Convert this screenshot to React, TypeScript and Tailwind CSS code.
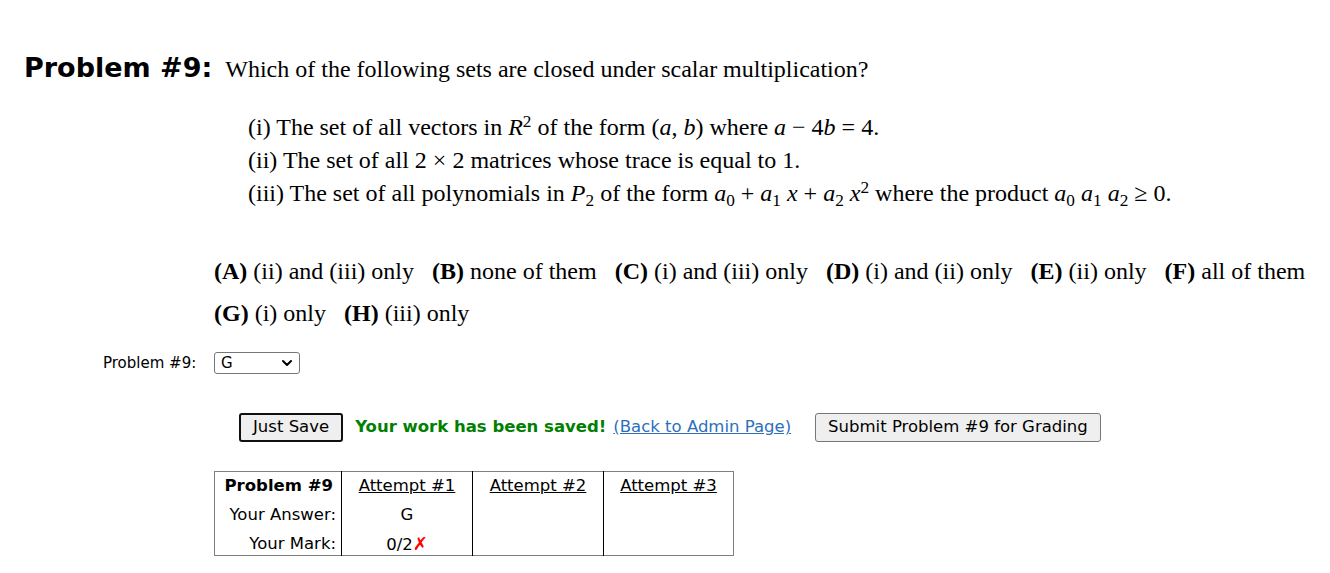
import { ChevronDown } from 'lucide-react';

const sans = { fontFamily: '"DejaVu Sans", Verdana, sans-serif' };

function I({ children }: { children: React.ReactNode }) {
  return <span className="italic">{children}</span>;
}

function Sub({ children }: { children: React.ReactNode }) {
  return <span className="relative top-[0.3em] text-[0.72em] leading-none">{children}</span>;
}

function Sup({ children }: { children: React.ReactNode }) {
  return <span className="relative -top-[0.45em] text-[0.72em] leading-none">{children}</span>;
}

function Opt({ letter, text }: { letter: string; text: string }) {
  return (
    <span className="mr-[18px] whitespace-nowrap">
      <b>({letter})</b> {text}
    </span>
  );
}

export default function App() {
  return (
    <div className="min-h-[573px] w-[1330px] bg-white text-black" style={{ fontFamily: '"Liberation Serif", "Times New Roman", serif' }}>
      <div className="pl-6 pt-[50px]">
        <div className="flex h-[36px] items-baseline leading-[36px]">
          <span className="text-[27px] font-bold" style={sans}>Problem #9:</span>
          <span className="ml-[13px] text-[24px]">Which of the following sets are closed under scalar multiplication?</span>
        </div>

        <div className="ml-[224px] mt-[25px] flex flex-col text-[24px] leading-[33px]">
          <div>
            (i) The set of all vectors in <I>R</I><Sup>2</Sup> of the form (<I>a</I>, <I>b</I>) where <I>a</I> − 4<I>b</I> = 4.
          </div>
          <div>(ii) The set of all 2 × 2 matrices whose trace is equal to 1.</div>
          <div>
            (iii) The set of all polynomials in <I>P</I><Sub>2</Sub> of the form <I>a</I><Sub>0</Sub> + <I>a</I><Sub>1</Sub> <I>x</I> + <I>a</I><Sub>2</Sub> <I>x</I><Sup>2</Sup> where the product <I>a</I><Sub>0</Sub> <I>a</I><Sub>1</Sub> <I>a</I><Sub>2</Sub> ≥ 0.
          </div>
        </div>

        <div className="ml-[190px] mt-[40px] text-[24px] leading-[42px]">
          <div className="whitespace-nowrap">
            <Opt letter="A" text="(ii) and (iii) only" />
            <Opt letter="B" text="none of them" />
            <Opt letter="C" text="(i) and (iii) only" />
            <Opt letter="D" text="(i) and (ii) only" />
            <Opt letter="E" text="(ii) only" />
            <Opt letter="F" text="all of them" />
          </div>
          <div>
            <Opt letter="G" text="(i) only" />
            <Opt letter="H" text="(iii) only" />
          </div>
        </div>

        <div className="mt-[18px] flex h-[22px] items-center text-[15px]" style={sans}>
          <span className="ml-[79px] w-[111px]">Problem #9:</span>
          <div className="flex h-[22px] w-[86px] items-center justify-between rounded-[3px] border border-[#767676] pl-[6px] pr-[4px]">
            <span>G</span>
            <ChevronDown size={16} strokeWidth={3} />
          </div>
        </div>

        <div className="ml-[215px] mt-[39px] flex items-center text-[16.5px]" style={sans}>
          <button className="h-[29px] rounded-[3px] border-2 border-[#101010] bg-[#efefef] px-[12px] leading-none">Just Save</button>
          <span className="ml-[12px] font-bold text-[#008000]">Your work has been saved!</span>
          <a className="ml-[7px] text-[#2c6fbb] underline">(Back to Admin Page)</a>
          <button className="ml-[24px] h-[29px] rounded-[3px] border border-[#767676] bg-[#efefef] px-[12px] leading-none">Submit Problem #9 for Grading</button>
        </div>

        <table className="ml-[190px] mt-[29px] border-collapse border border-[#808080] text-[16.5px] leading-[20px]" style={sans}>
          <tbody>
            <tr className="h-[29px] align-top">
              <td className="w-[127px] pr-[8px] pt-[4px] text-right font-bold">Problem #9</td>
              <td className="w-[131px] border-l border-black pt-[4px] text-center underline">Attempt #1</td>
              <td className="w-[131px] border-l border-black pt-[4px] text-center underline">Attempt #2</td>
              <td className="w-[130px] border-l border-black pt-[4px] text-center underline">Attempt #3</td>
            </tr>
            <tr className="h-[29px] align-top">
              <td className="pr-[5px] pt-[4px] text-right">Your Answer:</td>
              <td className="border-l border-black pt-[4px] text-center">G</td>
              <td className="border-l border-black"></td>
              <td className="border-l border-black"></td>
            </tr>
            <tr className="h-[25px] align-top">
              <td className="pr-[5px] pt-[4px] text-right">Your Mark:</td>
              <td className="border-l border-black pt-[4px] text-center">
                0/2<span className="text-[18px] font-bold text-[#ff0000]">✗</span>
              </td>
              <td className="border-l border-black"></td>
              <td className="border-l border-black"></td>
            </tr>
          </tbody>
        </table>
      </div>
    </div>
  );
}
